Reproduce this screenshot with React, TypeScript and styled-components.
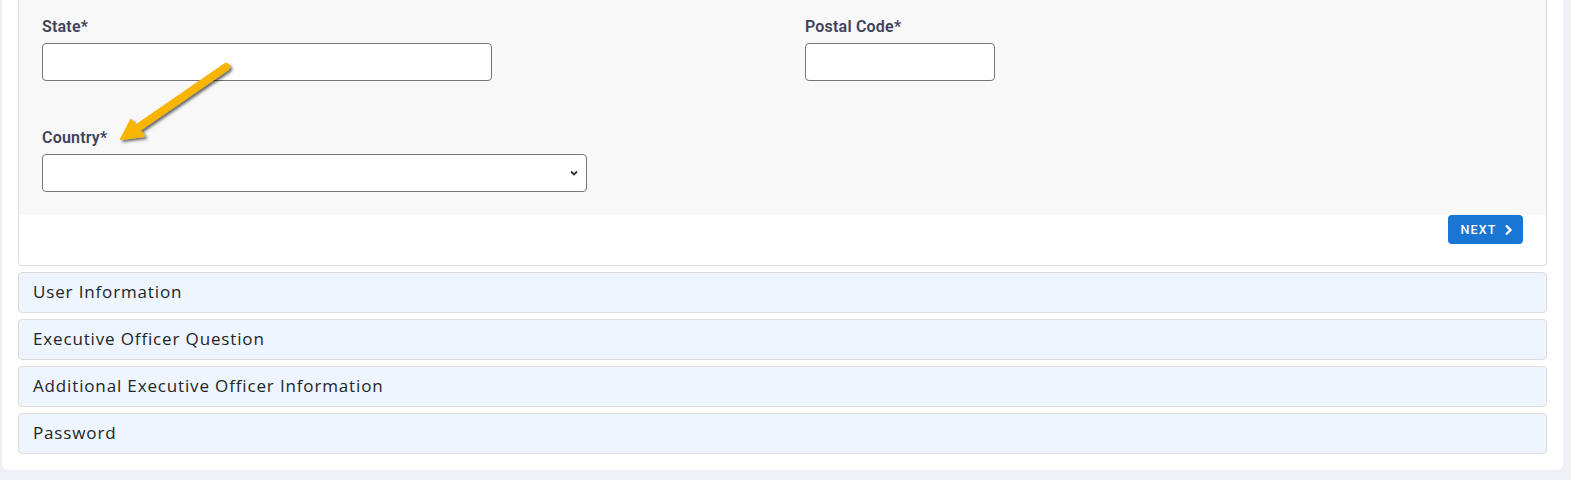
import React from "react";
import styled, {createGlobalStyle} from "styled-components";

const GlobalStyle = createGlobalStyle`
  html, body {
    margin: 0;
    padding: 0;
    background: #eef0f5;
  }
  * {
    box-sizing: border-box;
  }
`

const Page = styled.div`
  width: 1571px;
  height: 480px;
  overflow: hidden;
  background: #eef0f5;
  padding: 0 8px 0 2px;
  font-family: "Open Sans", "Liberation Sans", sans-serif;
`

const Card = styled.div`
  position: relative;
  background: #ffffff;
  border-radius: 0 0 6px 6px;
  padding: 0 16px 16px 16px;
  display: flex;
  flex-direction: column;
  gap: 6px;
`

const OpenItem = styled.div`
  border: 1px solid #dcdcdc;
  border-top: none;
  border-radius: 0 0 4px 4px;
  background: #ffffff;
  display: flex;
  flex-direction: column;
`

const FormPanel = styled.div`
  background: #f8f8f8;
  padding: 16px 24px 23px 23px;
  display: grid;
  grid-template-columns: 763px 1fr;
  row-gap: 46px;
`

const Field = styled.div`
  display: flex;
  flex-direction: column;
  gap: 6px;
`

const Label = styled.label`
  font-family: Roboto, "Liberation Sans", sans-serif;
  font-size: 16px;
  font-weight: 600;
  line-height: 21px;
  color: #3f425a;
  letter-spacing: 0.2px;
`

const TextInput = styled.input<{ $width: number }>`
  width: ${p => p.$width}px;
  height: 38px;
  border: 1px solid #767676;
  border-radius: 4px;
  background: #ffffff;
  outline: none;
`

const SelectBox = styled.div<{ $width: number }>`
  width: ${p => p.$width}px;
  height: 38px;
  border: 1px solid #767676;
  border-radius: 4px;
  background: #ffffff;
  display: flex;
  align-items: center;
  justify-content: flex-end;
  padding-right: 7px;
  color: #333;
`

const Footer = styled.div`
  display: flex;
  justify-content: flex-end;
  padding: 0 23px 21px 0;
`

const NextButton = styled.button`
  height: 29px;
  width: 75px;
  border: none;
  border-radius: 4px;
  background: #1976d2;
  color: #ffffff;
  font-family: Roboto, "Liberation Sans", sans-serif;
  font-size: 12.5px;
  font-weight: 500;
  letter-spacing: 1.2px;
  display: flex;
  align-items: center;
  justify-content: center;
  gap: 7px;
  padding: 0 0 0 2px;
`

const SectionHeader = styled.div`
  height: 41px;
  border: 1px solid #dcdcdc;
  border-radius: 4px;
  background: #eef5fe;
  display: flex;
  align-items: center;
  padding-left: 14px;
  padding-bottom: 2px;
  font-size: 17px;
  color: #212529;
  letter-spacing: 0.85px;
`

const Pointer = styled.svg`
  position: absolute;
  left: 100px;
  top: 50px;
  overflow: visible;
`

const Chevron = () => (
    <svg width="10" height="10" viewBox="0 0 10 10">
        <path d="M2 3.5 L5 6.5 L8 3.5" stroke="#333" strokeWidth="1.8" fill="none"/>
    </svg>
)

const NextIcon = () => (
    <svg width="9" height="12" viewBox="0 0 9 12">
        <path d="M2 1.5 L6.5 6 L2 10.5" stroke="#fff" strokeWidth="2.4" fill="none"/>
    </svg>
)

const sections = [
    "User Information",
    "Executive Officer Question",
    "Additional Executive Officer Information",
    "Password",
]

const App = () => {
    return (
        <Page>
            <GlobalStyle/>
            <Card>
                <OpenItem>
                    <FormPanel>
                        <Field>
                            <Label>State*</Label>
                            <TextInput $width={450}/>
                        </Field>
                        <Field>
                            <Label>Postal Code*</Label>
                            <TextInput $width={190}/>
                        </Field>
                        <Field>
                            <Label>Country*</Label>
                            <SelectBox $width={545}><Chevron/></SelectBox>
                        </Field>
                    </FormPanel>
                    <Footer>
                        <NextButton>NEXT <NextIcon/></NextButton>
                    </Footer>
                </OpenItem>
                {sections.map(s => <SectionHeader key={s}>{s}</SectionHeader>)}
                {/* annotation arrow */}
                <Pointer width="140" height="100" viewBox="0 0 140 100">
                    <defs>
                        <filter id="sh" x="-20%" y="-20%" width="140%" height="140%">
                            <feDropShadow dx="2" dy="2" stdDeviation="1.5" floodColor="#000" floodOpacity="0.6"/>
                        </filter>
                    </defs>
                    <g filter="url(#sh)">
                        <path d="M124 17 L34 79" stroke="#f7b500" strokeWidth="8" strokeLinecap="round"/>
                        <path d="M19 89 L29 70 L42 86 Z" fill="#f7b500" stroke="#f7b500" strokeWidth="2" strokeLinejoin="round"/>
                    </g>
                </Pointer>
            </Card>
        </Page>
    )
}

export default App
